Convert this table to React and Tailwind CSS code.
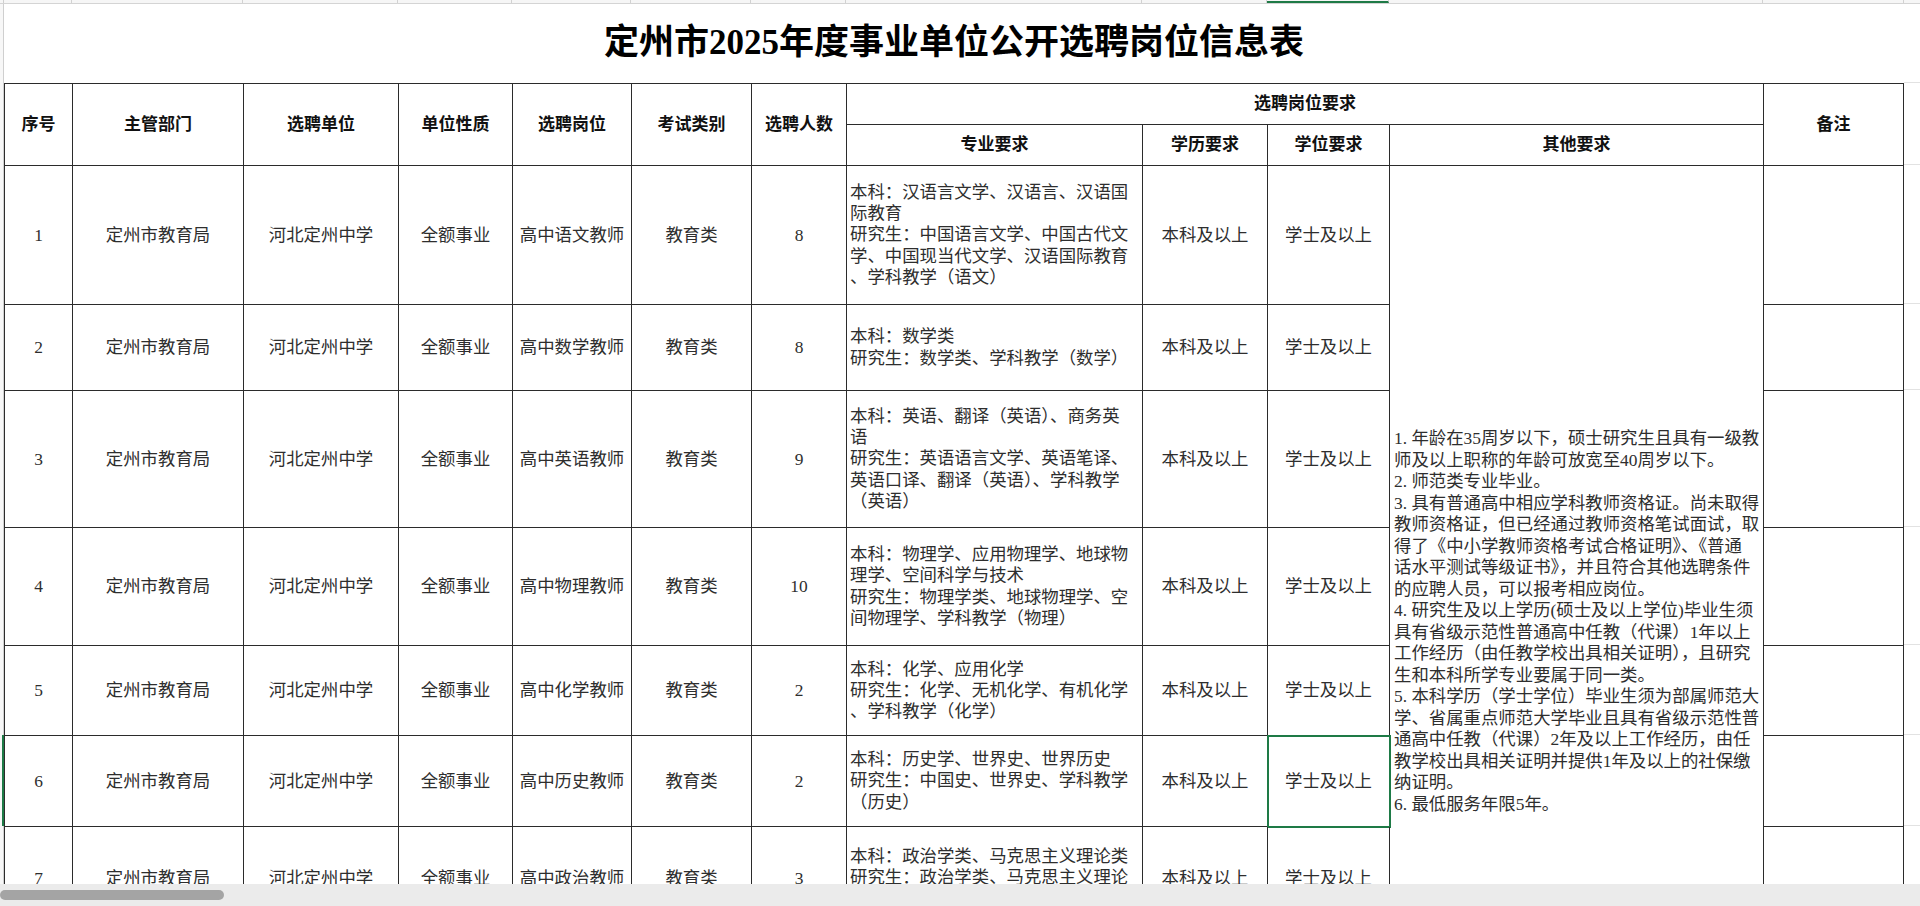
import React from "react";

const rows = [
  {
    no: "1",
    post: "高中语文教师",
    num: "8",
    major: [
      "本科：汉语言文学、汉语言、汉语国",
      "际教育",
      "研究生：中国语言文学、中国古代文",
      "学、中国现当代文学、汉语国际教育",
      "、学科教学（语文）",
    ],
  },
  {
    no: "2",
    post: "高中数学教师",
    num: "8",
    major: ["本科：数学类", "研究生：数学类、学科教学（数学）"],
  },
  {
    no: "3",
    post: "高中英语教师",
    num: "9",
    major: [
      "本科：英语、翻译（英语）、商务英",
      "语",
      "研究生：英语语言文学、英语笔译、",
      "英语口译、翻译（英语）、学科教学",
      "（英语）",
    ],
  },
  {
    no: "4",
    post: "高中物理教师",
    num: "10",
    major: [
      "本科：物理学、应用物理学、地球物",
      "理学、空间科学与技术",
      "研究生：物理学类、地球物理学、空",
      "间物理学、学科教学（物理）",
    ],
  },
  {
    no: "5",
    post: "高中化学教师",
    num: "2",
    major: ["本科：化学、应用化学", "研究生：化学、无机化学、有机化学", "、学科教学（化学）"],
  },
  {
    no: "6",
    post: "高中历史教师",
    num: "2",
    selected: true,
    major: ["本科：历史学、世界史、世界历史", "研究生：中国史、世界史、学科教学", "（历史）"],
  },
  {
    no: "7",
    post: "高中政治教师",
    num: "3",
    major: ["本科：政治学类、马克思主义理论类", "研究生：政治学类、马克思主义理论", "、学科教学（思想政治）"],
  },
];

const other = [
  "1. 年龄在35周岁以下，硕士研究生且具有一级教",
  "师及以上职称的年龄可放宽至40周岁以下。",
  "2. 师范类专业毕业。",
  "3. 具有普通高中相应学科教师资格证。尚未取得",
  "教师资格证，但已经通过教师资格笔试面试，取",
  "得了《中小学教师资格考试合格证明》、《普通",
  "话水平测试等级证书》，并且符合其他选聘条件",
  "的应聘人员，可以报考相应岗位。",
  "4. 研究生及以上学历(硕士及以上学位)毕业生须",
  "具有省级示范性普通高中任教（代课）1年以上",
  "工作经历（由任教学校出具相关证明），且研究",
  "生和本科所学专业要属于同一类。",
  "5. 本科学历（学士学位）毕业生须为部属师范大",
  "学、省属重点师范大学毕业且具有省级示范性普",
  "通高中任教（代课）2年及以上工作经历，由任",
  "教学校出具相关证明并提供1年及以上的社保缴",
  "纳证明。",
  "6. 最低服务年限5年。",
];

// heights of the sheet rows, used by the gutter and the blank strip on the right
const sideRows = [
  { h: "h-[79px]" },
  { h: "h-[82px]" },
  { h: "h-[139px]" },
  { h: "h-[86px]" },
  { h: "h-[137px]" },
  { h: "h-[118px]" },
  { h: "h-[90px]" },
  { h: "h-[91px]", selected: true },
  { h: "h-[103px]" },
];

const topCols = [
  "w-[68px]", "w-[171px]", "w-[155px]", "w-[114px]", "w-[119px]", "w-[120px]",
  "w-[95px]", "w-[296px]", "w-[125px]", "w-[122px]", "w-[374px]", "w-[141px]",
];

function Cell({ children, className = "" }) {
  return (
    <div className={"flex items-center justify-center border-r border-b border-[#2b2b2b] text-center " + className}>
      {children}
    </div>
  );
}

function Head({ children, className = "" }) {
  return <Cell className={"font-bold text-[17px] text-[#111] " + className}>{children}</Cell>;
}

export default function App() {
  return (
    <div className="w-[1920px] h-[906px] overflow-hidden bg-white font-['Liberation_Serif','Noto_Sans_CJK_SC',serif] text-[#2e2e2e]">
      {/* column header remnant */}
      <div className="flex h-[4px] bg-[#f6f6f6] border-b border-[#d4d4d4]">
        <div className="w-[4px] border-r border-[#cfcfcf]" />
        {topCols.map((w, i) => (
          <div key={i} className={w + " border-r border-[#d2d2d2] " + (i === 9 ? "border-b-2 border-b-[#1e7a46]" : "")} />
        ))}
        <div className="flex-1" />
      </div>

      <div className="flex h-[880px] overflow-hidden">
        {/* row header remnant */}
        <div className="w-[4px] flex flex-col bg-[#f7f7f7]">
          {sideRows.map((r, i) => (
            <div
              key={i}
              className={r.h + " shrink-0 border-r " + (r.selected ? "border-r-2 border-[#1e7a46]" : "border-[#cfcfcf]")}
            />
          ))}
        </div>

        <div className="w-[1900px] shrink-0">
          <div className="h-[79px] flex items-center justify-center text-[35px] font-bold text-black">
            定州市2025年度事业单位公开选聘岗位信息表
          </div>

          <div className="grid grid-cols-[68px_171px_155px_114px_119px_120px_95px_296px_125px_122px_374px_140px] grid-rows-[41px_41px_139px_86px_137px_118px_90px_91px_103px] border-l border-t border-[#2b2b2b] text-[17.4px]">
            <Head className="row-span-2">序号</Head>
            <Head className="row-span-2">主管部门</Head>
            <Head className="row-span-2">选聘单位</Head>
            <Head className="row-span-2">单位性质</Head>
            <Head className="row-span-2">选聘岗位</Head>
            <Head className="row-span-2">考试类别</Head>
            <Head className="row-span-2">选聘人数</Head>
            <Head className="col-span-4">选聘岗位要求</Head>
            <Head className="row-span-2">备注</Head>
            <Head>专业要求</Head>
            <Head>学历要求</Head>
            <Head>学位要求</Head>
            <Head>其他要求</Head>

            {rows.map((r, i) => (
              <React.Fragment key={r.no}>
                <Cell>{r.no}</Cell>
                <Cell>定州市教育局</Cell>
                <Cell>河北定州中学</Cell>
                <Cell>全额事业</Cell>
                <Cell>{r.post}</Cell>
                <Cell>教育类</Cell>
                <Cell>{r.num}</Cell>
                <div className="flex flex-col justify-center items-start pl-[3px] border-r border-b border-[#2b2b2b] leading-[21.3px] whitespace-nowrap">
                  {r.major.map((l, j) => (
                    <span key={j}>{l}</span>
                  ))}
                </div>
                <Cell>本科及以上</Cell>
                <Cell className={r.selected ? "outline-2 outline-[#1e7a46] -outline-offset-1" : ""}>学士及以上</Cell>
                {i === 0 && (
                  <div className="row-span-7 flex flex-col items-start pt-[262px] pl-[4px] border-r border-b border-[#2b2b2b] leading-[21.5px] whitespace-nowrap">
                    {other.map((l, j) => (
                      <span key={j}>{l}</span>
                    ))}
                  </div>
                )}
                <Cell />
              </React.Fragment>
            ))}
          </div>
        </div>

        {/* empty sheet area to the right */}
        <div className="flex-1 flex flex-col">
          {sideRows.map((r, i) => (
            <div key={i} className={r.h + " shrink-0 border-b border-[#e2e2e2]"} />
          ))}
        </div>
      </div>

      {/* horizontal scrollbar */}
      <div className="h-[22px] bg-[#ebebeb] pt-[6px]">
        <div className="w-[224px] h-[10px] rounded-full bg-[#a4a4a4]" />
      </div>
    </div>
  );
}
